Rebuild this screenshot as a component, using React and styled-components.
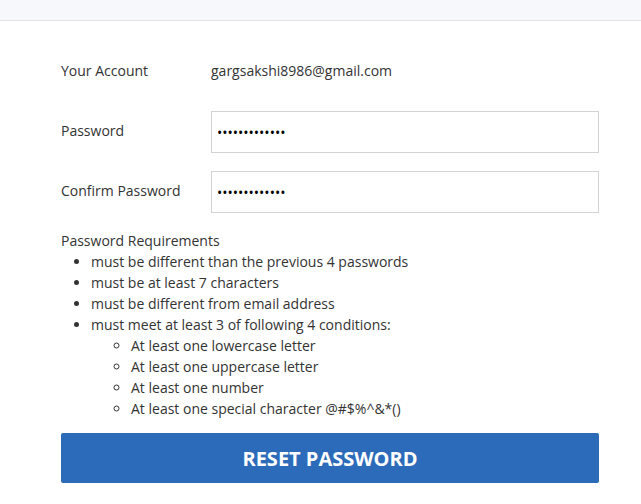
import React from "react";
import styled, { createGlobalStyle } from "styled-components";

const GlobalStyle = createGlobalStyle`
  body {
    margin: 0;
    background: #fff;
    font-family: "Open Sans", "DejaVu Sans", sans-serif;
    color: #333;
  }
`;

const TopBar = styled.div`
  height: 20px;
  background: #f7f8fb;
  border-bottom: 1px solid #e1e3e8;
`;

const Content = styled.div`
  padding: 30px 42px 0 61px;
`;

const Rows = styled.div`
  display: flex;
  flex-direction: column;
  gap: 18px;
`;

const Row = styled.div`
  display: grid;
  grid-template-columns: 150px 1fr;
  align-items: center;
  height: 42px;
  font-size: 14px;
`;

const Label = styled.div`
  margin-bottom: 4px;
`;

const Value = styled.div`
  margin-bottom: 4px;
`;

const Input = styled.input`
  box-sizing: border-box;
  width: 100%;
  height: 42px;
  border: 1px solid #d3d3d3;
  padding: 0 5px;
  font-family: "Open Sans", sans-serif;
  font-size: 14px;
  color: #000;
  caret-color: #000;
  &:focus {
    outline: none;
  }
`;

const Requirements = styled.div`
  margin-top: 17px;
  font-size: 14px;
  line-height: 21px;
`;

const List = styled.ul`
  margin: 0;
  padding-left: ${(p) => (p.nested ? "40px" : "30px")};
  list-style: ${(p) => (p.nested ? "circle" : "disc")};
`;

const ResetButton = styled.button`
  display: block;
  width: 100%;
  height: 50px;
  margin-top: 14px;
  border: none;
  border-radius: 2px;
  background: #2c6bb9;
  color: #fff;
  font-family: "Open Sans", sans-serif;
  font-weight: 700;
  font-size: 20px;
  cursor: pointer;
`;

const App = () => {
  return (
    <>
      <GlobalStyle />
      <TopBar />
      <Content>
        <Rows>
          <Row>
            <Label>Your Account</Label>
            <Value>gargsakshi8986@gmail.com</Value>
          </Row>
          <Row>
            <Label>Password</Label>
            <Input type="password" defaultValue="Sakshi@123456" />
          </Row>
          <Row>
            <Label>Confirm Password</Label>
            <Input type="password" defaultValue="Sakshi@123456" autoFocus />
          </Row>
        </Rows>
        <Requirements>
          Password Requirements
          <List>
            <li>must be different than the previous 4 passwords</li>
            <li>must be at least 7 characters</li>
            <li>must be different from email address</li>
            <li>
              must meet at least 3 of following 4 conditions:
              <List nested>
                <li>At least one lowercase letter</li>
                <li>At least one uppercase letter</li>
                <li>At least one number</li>
                <li>At least one special character @#$%^&amp;*()</li>
              </List>
            </li>
          </List>
        </Requirements>
        <ResetButton>RESET PASSWORD</ResetButton>
      </Content>
    </>
  );
};

export default App;
